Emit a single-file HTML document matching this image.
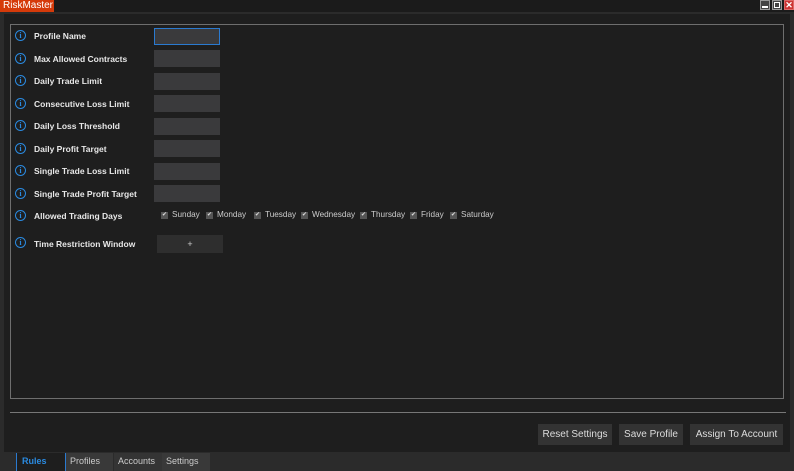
<!DOCTYPE html>
<html><head><style>
body{margin:0;width:794px;height:471px;background:#2b2b2b;font-family:"Liberation Sans",sans-serif;position:relative;overflow:hidden;color:#ddd}
.abs{position:absolute}
.title{left:0;top:0;width:54px;height:12px;background:#d53a0a;color:#fff;font-size:10px;line-height:12px;padding-left:3px;box-sizing:border-box}
.top{left:0;top:0;width:794px;height:12px;background:#1b1b1b}
.panel{left:4px;top:14px;width:786px;height:438px;background:#1e1e1e}
.group{left:10px;top:24px;width:774px;height:375px;border:1px solid #6e6e6e;box-sizing:border-box}
.sep{left:10px;top:412px;width:776px;height:1px;background:#777}
.ic{width:9px;height:9px;border:1.3px solid #2a8ae0;border-radius:50%;color:#2a8ae0;font-size:8px;line-height:9px;text-align:center;font-weight:bold;font-family:"Liberation Serif",serif}
.lbl{left:34px;font-size:8.5px;font-weight:bold;color:#e8e8e8}
.inp{left:154px;width:66px;height:17px;background:#3a3a3c;box-sizing:border-box}
.btn{top:424px;height:21px;background:#333;color:#ddd;font-size:10px;line-height:21px;text-align:center}
.tab{top:453px;height:18px;font-size:9px;line-height:16px;padding-left:4px;box-sizing:border-box;background:#393939;color:#ccc}
.cb{width:7px;height:7px;background:#555;font-size:6px;line-height:7px;text-align:center;color:#ddd}
.day{font-size:8.2px;color:#ccc}
.wb{top:0;width:10px;height:10px;background:#444;border:1px solid #999;box-sizing:border-box}
</style></head><body>
<div class="abs top"></div>
<div class="abs title">RiskMaster</div>
<div class="abs wb" style="left:760px"></div><div class="abs" style="left:762px;top:6px;width:6px;height:2px;background:#fff"></div>
<div class="abs wb" style="left:772px"></div><div class="abs" style="left:774px;top:2px;width:6px;height:6px;border:1px solid #fff;box-sizing:border-box"></div>
<div class="abs wb" style="left:784px;background:#c33;border-color:#d66;color:#fff;font-size:9px;line-height:8px;text-align:center;font-weight:bold">✕</div>
<div class="abs panel"></div>
<div class="abs group"></div>
<div class="abs sep"></div>

<div class="abs ic" style="left:15px;top:30px">i</div><div class="abs lbl" style="top:31px">Profile Name</div><div class="abs inp" style="top:28px;border:1px solid #2a7ad0"></div>
<div class="abs ic" style="left:15px;top:53px">i</div><div class="abs lbl" style="top:54px">Max Allowed Contracts</div><div class="abs inp" style="top:50px"></div>
<div class="abs ic" style="left:15px;top:75px">i</div><div class="abs lbl" style="top:76px">Daily Trade Limit</div><div class="abs inp" style="top:73px"></div>
<div class="abs ic" style="left:15px;top:98px">i</div><div class="abs lbl" style="top:99px">Consecutive Loss Limit</div><div class="abs inp" style="top:95px"></div>
<div class="abs ic" style="left:15px;top:120px">i</div><div class="abs lbl" style="top:121px">Daily Loss Threshold</div><div class="abs inp" style="top:118px"></div>
<div class="abs ic" style="left:15px;top:143px">i</div><div class="abs lbl" style="top:144px">Daily Profit Target</div><div class="abs inp" style="top:140px"></div>
<div class="abs ic" style="left:15px;top:165px">i</div><div class="abs lbl" style="top:166px">Single Trade Loss Limit</div><div class="abs inp" style="top:163px"></div>
<div class="abs ic" style="left:15px;top:188px">i</div><div class="abs lbl" style="top:189px">Single Trade Profit Target</div><div class="abs inp" style="top:185px"></div>
<div class="abs ic" style="left:15px;top:210px">i</div><div class="abs lbl" style="top:211px">Allowed Trading Days</div>
<div class="abs ic" style="left:15px;top:237px">i</div><div class="abs lbl" style="top:239px">Time Restriction Window</div>

<div class="abs cb" style="left:161px;top:212px">✔</div><div class="abs day" style="left:172px;top:210px">Sunday</div>
<div class="abs cb" style="left:206px;top:212px">✔</div><div class="abs day" style="left:217px;top:210px">Monday</div>
<div class="abs cb" style="left:254px;top:212px">✔</div><div class="abs day" style="left:265px;top:210px">Tuesday</div>
<div class="abs cb" style="left:301px;top:212px">✔</div><div class="abs day" style="left:312px;top:210px">Wednesday</div>
<div class="abs cb" style="left:360px;top:212px">✔</div><div class="abs day" style="left:371px;top:210px">Thursday</div>
<div class="abs cb" style="left:410px;top:212px">✔</div><div class="abs day" style="left:421px;top:210px">Friday</div>
<div class="abs cb" style="left:450px;top:212px">✔</div><div class="abs day" style="left:461px;top:210px">Saturday</div>

<div class="abs" style="left:157px;top:235px;width:66px;height:18px;background:#2e2e2e;font-size:9px;line-height:18px;text-align:center;color:#ccc">+</div>

<div class="abs btn" style="left:538px;width:74px">Reset Settings</div>
<div class="abs btn" style="left:619px;width:64px">Save Profile</div>
<div class="abs btn" style="left:690px;width:93px">Assign To Account</div>

<div class="abs tab" style="left:16px;width:50px;background:#1e1e1e;color:#2a8ae0;font-weight:bold;border-left:1px solid #2a7ad0;border-right:1px solid #2a7ad0;padding-left:5px">Rules</div>
<div class="abs tab" style="left:66px;width:47px">Profiles</div>
<div class="abs tab" style="left:114px;width:48px;background:#343434">Accounts</div>
<div class="abs tab" style="left:162px;width:48px">Settings</div>
</body></html>
